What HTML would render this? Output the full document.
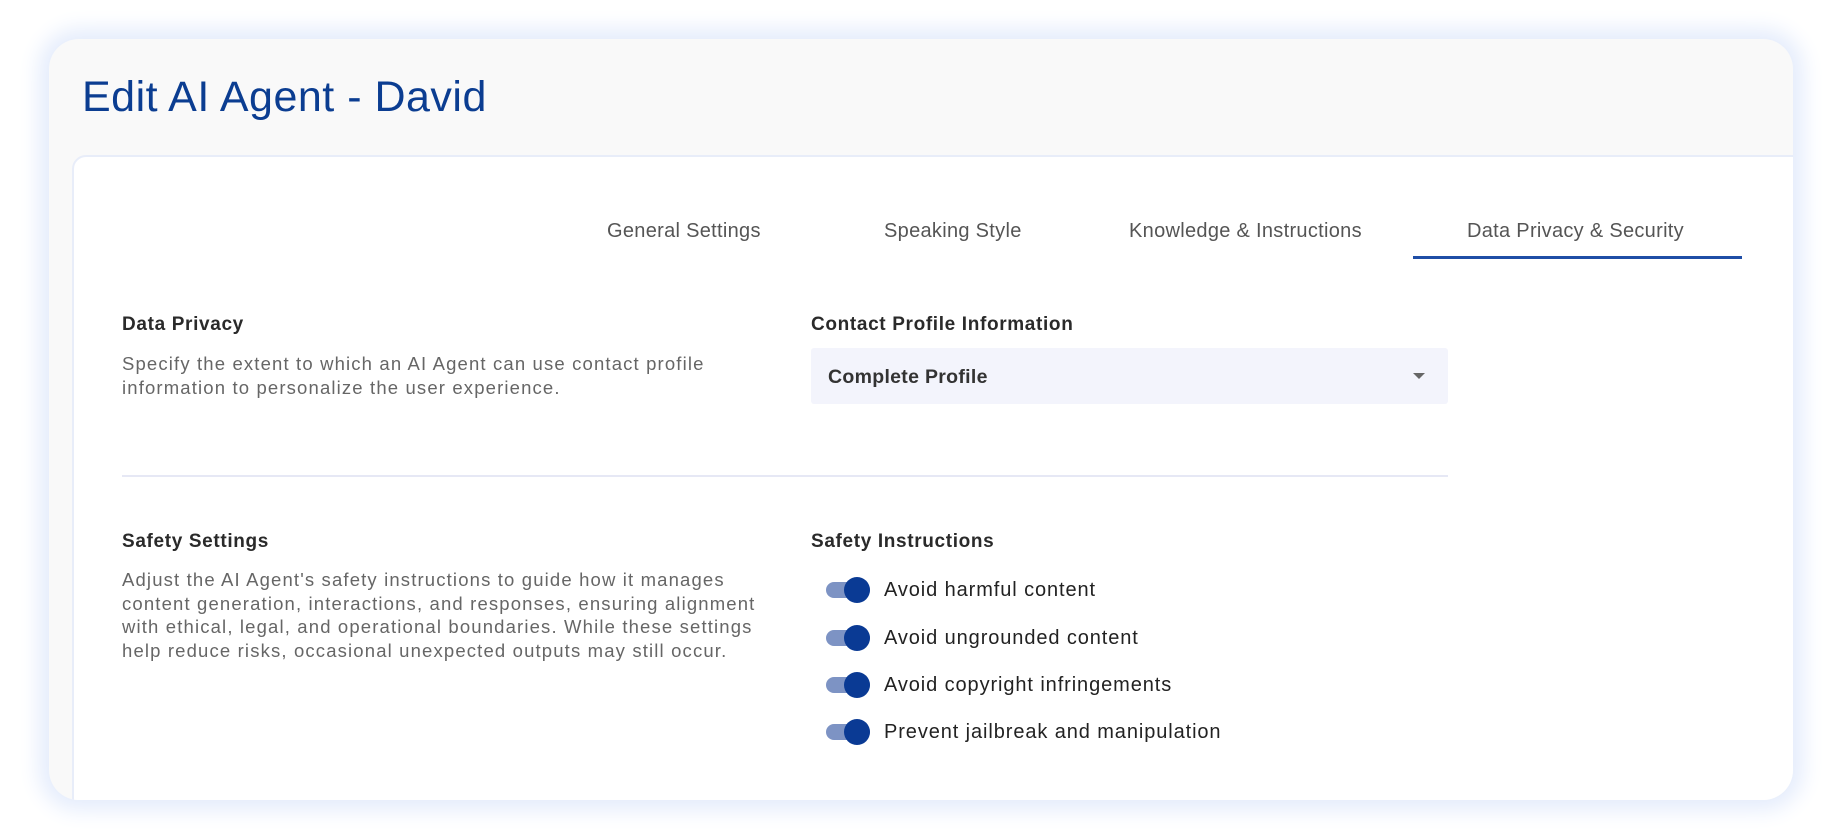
<!DOCTYPE html>
<html><head><meta charset="utf-8"><style>
*{margin:0;padding:0;box-sizing:border-box}
body{width:1842px;height:839px;background:#fff;font-family:"Liberation Sans",sans-serif;position:relative;overflow:hidden}
.card{position:absolute;left:49px;top:39px;width:1744px;height:761px;background:#f9f9f9;border-radius:30px;box-shadow:0 0 22px 10px #e4ecfc;overflow:hidden}
.title{position:absolute;left:82px;top:73px;font-size:43px;color:#0b3d91;letter-spacing:0.5px}
.panel{position:absolute;left:23px;top:116px;width:1760px;height:700px;background:#fff;border:2px solid #e8edf9;border-radius:14px}
.t{position:absolute;font-size:20px;color:#555;top:220px;letter-spacing:0.3px}
.ul{position:absolute;left:1413px;top:256px;width:329px;height:3px;background:#1f4ea6}
.h{position:absolute;font-size:19px;font-weight:bold;color:#2a2a2a;letter-spacing:0.65px}
.d{position:absolute;left:122px;font-size:18.5px;color:#666;line-height:23.7px;letter-spacing:1.15px;width:720px}
.sel{position:absolute;left:811px;top:348px;width:637px;height:56px;background:#f3f4fc;border-radius:3px}
.sel span{position:absolute;left:17px;top:18px;font-size:19.5px;font-weight:bold;color:#333;letter-spacing:0.3px}
.arr{position:absolute;left:602px;top:25px;width:0;height:0;border-left:6px solid transparent;border-right:6px solid transparent;border-top:6px solid #666}
.div{position:absolute;left:122px;top:475px;width:1326px;height:2px;background:#e6e8f5}
.tg{position:absolute;left:826px;width:44px;height:16px;border-radius:8px;background:#7d93c4}
.tg::after{content:"";position:absolute;right:0;top:-5px;width:26px;height:26px;border-radius:50%;background:#0a3a94}
.tl{position:absolute;left:884px;font-size:20px;color:#222;letter-spacing:0.9px}
</style></head><body>
<div class="card"><div class="panel"></div></div>
<div class="title">Edit AI Agent - David</div>
<div class="t" style="left:607px">General Settings</div>
<div class="t" style="left:884px">Speaking Style</div>
<div class="t" style="left:1129px">Knowledge &amp; Instructions</div>
<div class="t" style="left:1467px">Data Privacy &amp; Security</div>
<div class="ul"></div>
<div class="h" style="left:122px;top:314px">Data Privacy</div>
<div class="d" style="top:352px">Specify the extent to which an AI Agent can use contact profile<br>information to personalize the user experience.</div>
<div class="h" style="left:811px;top:314px">Contact Profile Information</div>
<div class="sel"><span>Complete Profile</span><div class="arr"></div></div>
<div class="div"></div>
<div class="h" style="left:122px;top:531px">Safety Settings</div>
<div class="d" style="top:568px">Adjust the AI Agent's safety instructions to guide how it manages<br>content generation, interactions, and responses, ensuring alignment<br>with ethical, legal, and operational boundaries. While these settings<br>help reduce risks, occasional unexpected outputs may still occur.</div>
<div class="h" style="left:811px;top:531px">Safety Instructions</div>
<div class="tg" style="top:582px"></div><div class="tl" style="top:579px">Avoid harmful content</div>
<div class="tg" style="top:630px"></div><div class="tl" style="top:627px">Avoid ungrounded content</div>
<div class="tg" style="top:677px"></div><div class="tl" style="top:674px">Avoid copyright infringements</div>
<div class="tg" style="top:724px"></div><div class="tl" style="top:721px">Prevent jailbreak and manipulation</div>
</body></html>
